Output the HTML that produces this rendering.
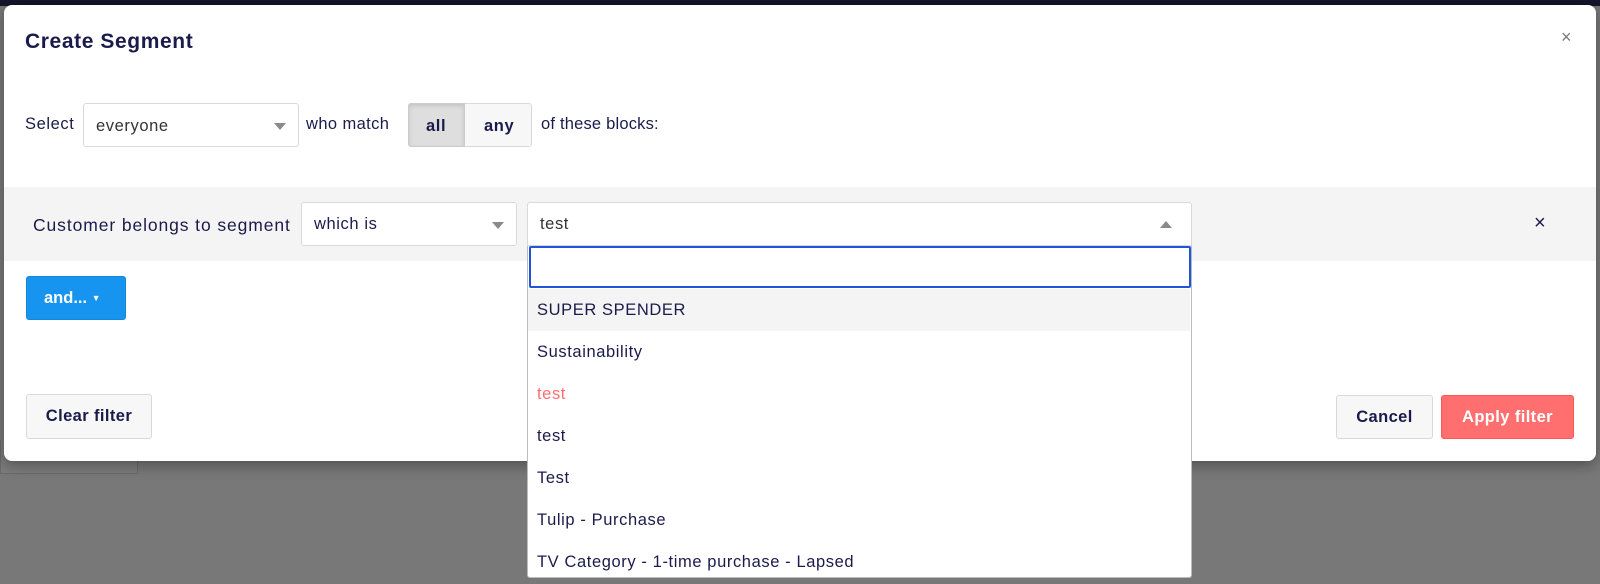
<!DOCTYPE html>
<html><head><meta charset="utf-8"><style>
*{box-sizing:border-box;margin:0;padding:0}
body{width:1600px;height:584px;overflow:hidden;background:#787878;font-family:"Liberation Sans",sans-serif;color:#1b1b4b;position:relative}
.top{position:absolute;left:0;top:0;width:1600px;height:6px;background:#14142b}
.behind{position:absolute;left:0;top:440px;width:138px;height:34px;background:#7c7c7c;border:1px solid #6a6a6a;border-top:none}
.modal{position:absolute;left:4px;top:5px;width:1592px;height:456px;background:#fff;border-radius:8px;box-shadow:0 4px 14px rgba(0,0,0,.35)}
.a{position:absolute}
.t{font-size:16.5px;letter-spacing:0.6px;white-space:nowrap}
.box{position:absolute;background:#fff;border:1px solid #d9d9d9;border-radius:3px}
.caret{position:absolute;width:0;height:0;border-left:6px solid transparent;border-right:6px solid transparent;border-top:7px solid #8a8a8a}
.btn{position:absolute;border:1px solid #d9d9d9;border-radius:3px;background:#f7f7f7;font-size:16.5px;letter-spacing:0.4px;font-weight:bold;display:flex;align-items:center;justify-content:center}
.item{position:absolute;left:0;width:662px;height:42px;padding-left:9px;line-height:42px;font-size:16.5px;letter-spacing:0.6px;white-space:nowrap}
</style></head><body>
<div class="top"></div>
<div class="behind"></div>
<div class="modal">
  <div class="a" style="left:21px;top:25px;font-size:21px;font-weight:bold;letter-spacing:0.6px">Create Segment</div>
  <div class="a" style="left:1557px;top:22px;font-size:18px;color:#777">×</div>
  <div class="a t" style="left:21px;top:110px">Select</div>
  <div class="box" style="left:79px;top:98px;width:216px;height:44px"><span class="a t" style="left:12px;top:13px;color:#333">everyone</span><div class="caret" style="left:190px;top:19px"></div></div>
  <div class="a t" style="left:302px;top:110px;letter-spacing:0.4px">who match</div>
  <div class="box" style="left:404px;top:98px;width:124px;height:44px;background:#f7f7f7"></div>
  <div class="a" style="left:404px;top:98px;width:57px;height:44px;background:#dedede;border:1px solid #ccc;border-radius:3px 0 0 3px;box-shadow:inset 0 2px 4px rgba(0,0,0,.12)"></div>
  <div class="a t" style="left:422px;top:112px;font-weight:bold">all</div>
  <div class="a t" style="left:480px;top:112px;font-weight:bold">any</div>
  <div class="a t" style="left:537px;top:110px;letter-spacing:0.2px">of these blocks:</div>
  <div class="a" style="left:0;top:182px;width:1592px;height:74px;background:#f4f4f4"></div>
  <div class="a t" style="left:29px;top:210px;font-size:17.5px;letter-spacing:0.9px">Customer belongs to segment</div>
  <div class="box" style="left:297px;top:197px;width:216px;height:44px"><span class="a t" style="left:12px;top:12px">which is</span><div class="caret" style="left:190px;top:19px"></div></div>
  <div class="box" style="left:523px;top:197px;width:665px;height:44px;border-radius:3px 3px 0 0"><span class="a t" style="left:12px;top:12px;color:#333">test</span><div class="caret" style="left:632px;top:18px;border-top:none;border-bottom:7px solid #8a8a8a"></div></div>
  <div class="a" style="left:1530px;top:207px;font-size:20px">×</div>
  <div class="a" style="left:22px;top:271px;width:100px;height:44px;background:#1694f0;border:1px solid #1287dc;border-radius:3px;color:#fff;font-size:16.5px;font-weight:bold;line-height:42px;padding-left:17px">and... <span style="font-size:9px;vertical-align:2px">▼</span></div>
  <div class="btn" style="left:22px;top:389px;width:126px;height:45px">Clear filter</div>
  <div class="btn" style="left:1332px;top:390px;width:97px;height:44px">Cancel</div>
  <div class="btn" style="left:1437px;top:390px;width:133px;height:44px;background:#ff6f6f;border-color:#f55;color:#fff">Apply filter</div>
</div>
<div class="a" style="left:527px;top:246px;width:665px;height:332px;background:#fff;border:1px solid #bbb;border-top:none;border-radius:0 0 3px 3px">
  <div class="a" style="left:1px;top:0;width:662px;height:42px;border:2px solid #1f55d6;border-radius:2px;background:#fff"></div>
  <div class="item" style="top:43px;background:#f4f4f4">SUPER SPENDER</div>
  <div class="item" style="top:85px">Sustainability</div>
  <div class="item" style="top:127px;color:#ff6f6f">test</div>
  <div class="item" style="top:169px">test</div>
  <div class="item" style="top:211px">Test</div>
  <div class="item" style="top:253px">Tulip - Purchase</div>
  <div class="item" style="top:295px">TV Category - 1-time purchase - Lapsed</div>
</div>
</body></html>
